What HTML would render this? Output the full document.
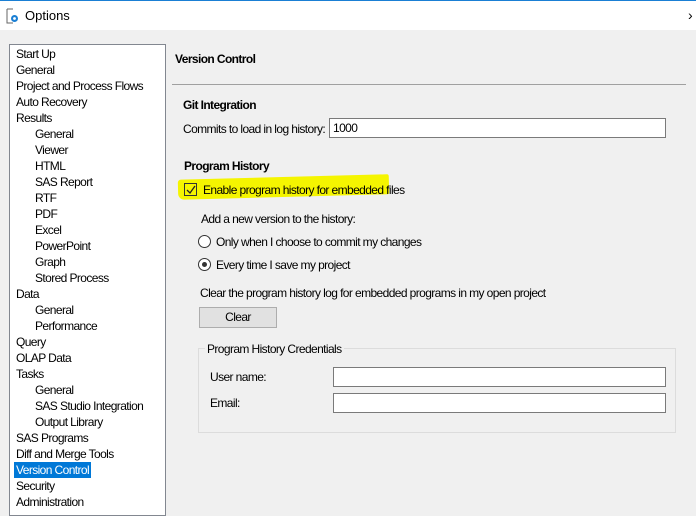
<!DOCTYPE html>
<html><head><meta charset="utf-8"><style>
body{margin:0;width:696px;height:502px;overflow:hidden;background:#f0f0f0;font-family:"Liberation Sans",sans-serif;font-size:12px;letter-spacing:-0.6px;color:#000;position:relative}
.a{position:absolute;white-space:nowrap}
.title{position:absolute;left:0;top:0;width:696px;height:30px;background:#fff;border-top:1px solid #1a7fd4;box-sizing:border-box}
.tree{position:absolute;left:9px;top:44px;width:155px;height:470px;background:#fff;border:1px solid #828790}
.tree div{position:absolute;height:16px;line-height:16px}
.b{font-weight:bold}
.tb{position:absolute;background:#fff;border:1px solid #7a7a7a;box-sizing:border-box}
</style></head><body>
<div class="title">
<svg class="a" style="left:6px;top:7px" width="14" height="16" viewBox="0 0 14 16"><path d="M1 1h6M1 1v14h6" fill="none" stroke="#666" stroke-width="1"/><circle cx="8.5" cy="10.5" r="3.5" fill="#1a7fd4"/><circle cx="8.5" cy="10.5" r="1.4" fill="#fff"/></svg>
<div class="a" style="left:25px;top:7px;font-size:13px;letter-spacing:0">Options</div>
<div class="a" style="left:688px;top:6px;font-size:14px">›</div>
</div>
<div class="tree">
<div style="left:6px;top:1px">Start Up</div>
<div style="left:6px;top:17px">General</div>
<div style="left:6px;top:33px">Project and Process Flows</div>
<div style="left:6px;top:49px">Auto Recovery</div>
<div style="left:6px;top:65px">Results</div>
<div style="left:25px;top:81px">General</div>
<div style="left:25px;top:97px">Viewer</div>
<div style="left:25px;top:113px">HTML</div>
<div style="left:25px;top:129px">SAS Report</div>
<div style="left:25px;top:145px">RTF</div>
<div style="left:25px;top:161px">PDF</div>
<div style="left:25px;top:177px">Excel</div>
<div style="left:25px;top:193px">PowerPoint</div>
<div style="left:25px;top:209px">Graph</div>
<div style="left:25px;top:225px">Stored Process</div>
<div style="left:6px;top:241px">Data</div>
<div style="left:25px;top:257px">General</div>
<div style="left:25px;top:273px">Performance</div>
<div style="left:6px;top:289px">Query</div>
<div style="left:6px;top:305px">OLAP Data</div>
<div style="left:6px;top:321px">Tasks</div>
<div style="left:25px;top:337px">General</div>
<div style="left:25px;top:353px">SAS Studio Integration</div>
<div style="left:25px;top:369px">Output Library</div>
<div style="left:6px;top:385px">SAS Programs</div>
<div style="left:6px;top:401px">Diff and Merge Tools</div>
<div style="left:4px;top:417px;background:#0078d7;color:#fff;padding:0 2px">Version Control</div>
<div style="left:6px;top:433px">Security</div>
<div style="left:6px;top:449px">Administration</div>
</div>
<div class="a b" style="left:175px;top:52px">Version Control</div>
<div class="a" style="left:172px;top:84px;width:514px;height:1px;background:#a0a0a0"></div>
<div class="a b" style="left:183px;top:98px">Git Integration</div>
<div class="a" style="left:183px;top:122px">Commits to load in log history:</div>
<div class="tb" style="left:329px;top:118px;width:337px;height:20px;padding:2px 3px">1000</div>
<div class="a b" style="left:184px;top:159px">Program History</div>
<div class="a" style="left:178px;top:177px;width:211px;height:20px;background:#f5f500;border-radius:3px 2px 2px 6px;transform:rotate(-1.5deg)"></div>
<div class="a" style="left:184px;top:183px;width:11px;height:11px;border:1px solid #333;background:#f5f500"></div>
<svg class="a" style="left:185px;top:184px" width="12" height="12"><path d="M2 6l3 3 5-7" fill="none" stroke="#222" stroke-width="1.3"/></svg>
<div class="a" style="left:203px;top:183px">Enable program history for embedded files</div>
<div class="a" style="left:201px;top:212px">Add a new version to the history:</div>
<div class="a" style="left:198px;top:235px;width:11px;height:11px;border:1px solid #333;border-radius:50%;background:#fff"></div>
<div class="a" style="left:216px;top:235px">Only when I choose to commit my changes</div>
<div class="a" style="left:198px;top:258px;width:11px;height:11px;border:1px solid #333;border-radius:50%;background:#fff"></div>
<div class="a" style="left:202px;top:262px;width:5px;height:5px;border-radius:50%;background:#333"></div>
<div class="a" style="left:216px;top:258px">Every time I save my project</div>
<div class="a" style="left:200px;top:286px">Clear the program history log for embedded programs in my open project</div>
<div class="a" style="left:199px;top:307px;width:76px;height:19px;border:1px solid #adadad;background:#e1e1e1;text-align:center;line-height:19px">Clear</div>
<div class="a" style="left:198px;top:348px;width:476px;height:83px;border:1px solid #dcdcdc"></div>
<div class="a" style="left:205px;top:342px;background:#f0f0f0;padding:0 2px">Program History Credentials</div>
<div class="a" style="left:210px;top:370px">User name:</div>
<div class="tb" style="left:333px;top:367px;width:333px;height:20px"></div>
<div class="a" style="left:210px;top:396px">Email:</div>
<div class="tb" style="left:333px;top:393px;width:333px;height:20px"></div>
</body></html>
